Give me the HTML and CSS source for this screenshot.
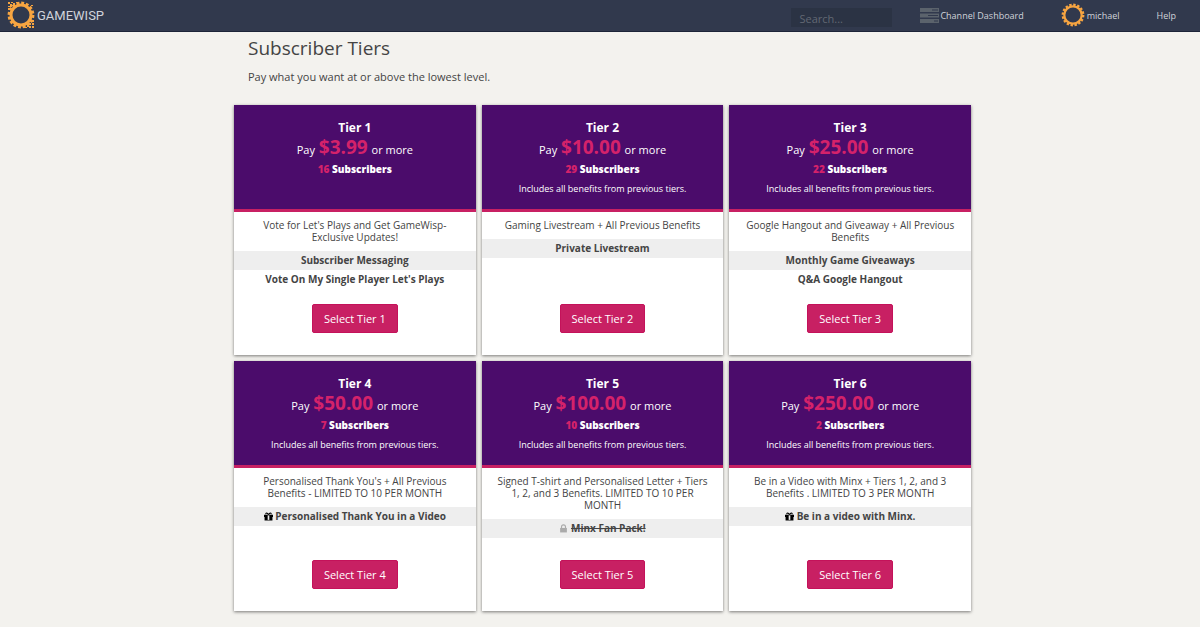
FILE: index.html
```
<!DOCTYPE html>
<html lang="en">
<head>
  <meta charset="UTF-8" />
  <meta name="viewport" content="width=device-width, initial-scale=1.0"/>
  <title>GameWisp - Subscriber Tiers</title>
  <link rel="stylesheet" href="styles.css">
</head>
<body>

  <!-- shared icons -->
  <svg class="sprite" aria-hidden="true">
    <symbol id="gear" viewBox="0 0 24 24">
      <circle cx="12" cy="12" r="8.7" fill="none" stroke="#f7a541" stroke-width="2.2"/>
      <circle cx="12" cy="12" r="10.2" fill="none" stroke="#f7a541" stroke-width="2.4" stroke-dasharray="2.4 1.6"/>
    </symbol>
    <symbol id="gift" viewBox="0 0 16 16">
      <path fill="#000" d="M0 5h16v4H0zM1 9h14v6H1z"/>
      <path fill="none" stroke="#000" stroke-width="2" d="M8 5C6 1 2.5 1 3.500 4M8 5c2-4 5.500-4 4.500-1"/>
      <path fill="#eee" d="M6.500 6h3v8h-3z"/>
    </symbol>
    <symbol id="lock" viewBox="0 0 16 16">
      <path fill="#aaa" d="M2 7h12v8H2z"/>
      <path fill="none" stroke="#aaa" stroke-width="2" d="M4.500 8V5a3.500 3.500 0 0 1 7 0v3"/>
    </symbol>
  </svg>

  <header class="topbar">
    <a class="brand" href="#">
      <svg class="logo" viewBox="0 0 28 28" aria-hidden="true">
        <circle cx="14" cy="14" r="10" fill="none" stroke="#f7a541" stroke-width="3"/>
        <circle cx="14" cy="14" r="12" fill="none" stroke="#f7a541" stroke-width="2.8" stroke-dasharray="2.9 1.8"/>
        <path fill="#f7a541" d="M1 1h2v2H1zM4 1h2v1H4zM6 2h2v2H6zM1 5h2v1H1zM3 3h2v3H3zM1 7h2v2H1zM9 1h2v1H9zM25 25h2v2h-2zM22 25h2v2h-2zM20 24h2v2h-2zM25 22h2v2h-2zM22 22h2v2h-2zM25 19h2v2h-2zM18 26h2v1h-2zM24 4h2v1h-2z"/>
      </svg>
      <span>GAMEWISP</span>
    </a>
    <nav class="menu">
      <input class="search" type="text" placeholder="Search..." aria-label="Search">
      <a class="dashboard" href="#">
        <svg class="bars" viewBox="0 0 19 15" aria-hidden="true">
          <path fill="#5b636c" d="M0 0h19v4H0zM0 5.500h19v4H0zM0 11h19v4H0z"/>
          <path fill="#31394d" d="M12 1.500h6v1h-6zM8 7h10v1H8zM14 12.500h4v1h-4z"/>
        </svg>
        Channel Dashboard
      </a>
      <a class="user" href="#">
        <svg class="avatar" aria-hidden="true"><use href="#gear"/></svg>
        michael
      </a>
      <a class="help" href="#">Help</a>
    </nav>
  </header>

  <main>
    <h1>Subscriber Tiers</h1>
    <p class="intro">Pay what you want at or above the lowest level.</p>

    <section class="tiers">
      <article class="tier">
        <div class="tier-head">
          <h2>Tier 1</h2>
          <p class="price">Pay <strong>$3.99</strong> or more</p>
          <p class="subs"><span>16</span> Subscribers</p>
        </div>
        <p class="desc">Vote for Let's Plays and Get GameWisp-Exclusive Updates!</p>
        <ul class="benefits">
          <li>Subscriber Messaging</li>
          <li>Vote On My Single Player Let's Plays</li>
        </ul>
        <button class="select" type="button">Select Tier 1</button>
      </article>

      <article class="tier">
        <div class="tier-head">
          <h2>Tier 2</h2>
          <p class="price">Pay <strong>$10.00</strong> or more</p>
          <p class="subs"><span>29</span> Subscribers</p>
          <p class="includes">Includes all benefits from previous tiers.</p>
        </div>
        <p class="desc">Gaming Livestream + All Previous Benefits</p>
        <ul class="benefits">
          <li>Private Livestream</li>
        </ul>
        <button class="select" type="button">Select Tier 2</button>
      </article>

      <article class="tier">
        <div class="tier-head">
          <h2>Tier 3</h2>
          <p class="price">Pay <strong>$25.00</strong> or more</p>
          <p class="subs"><span>22</span> Subscribers</p>
          <p class="includes">Includes all benefits from previous tiers.</p>
        </div>
        <p class="desc">Google Hangout and Giveaway + All Previous Benefits</p>
        <ul class="benefits">
          <li>Monthly Game Giveaways</li>
          <li>Q&amp;A Google Hangout</li>
        </ul>
        <button class="select" type="button">Select Tier 3</button>
      </article>

      <article class="tier">
        <div class="tier-head">
          <h2>Tier 4</h2>
          <p class="price">Pay <strong>$50.00</strong> or more</p>
          <p class="subs"><span>7</span> Subscribers</p>
          <p class="includes">Includes all benefits from previous tiers.</p>
        </div>
        <p class="desc">Personalised Thank You's + All Previous Benefits - LIMITED TO 10 PER MONTH</p>
        <ul class="benefits">
          <li><svg class="icon" aria-hidden="true"><use href="#gift"/></svg> Personalised Thank You in a Video</li>
        </ul>
        <button class="select" type="button">Select Tier 4</button>
      </article>

      <article class="tier">
        <div class="tier-head">
          <h2>Tier 5</h2>
          <p class="price">Pay <strong>$100.00</strong> or more</p>
          <p class="subs"><span>10</span> Subscribers</p>
          <p class="includes">Includes all benefits from previous tiers.</p>
        </div>
        <p class="desc">Signed T-shirt and Personalised Letter + Tiers 1, 2, and 3 Benefits. LIMITED TO 10 PER MONTH</p>
        <ul class="benefits">
          <li><svg class="icon" aria-hidden="true"><use href="#lock"/></svg> <del>Minx Fan Pack!</del></li>
        </ul>
        <button class="select" type="button">Select Tier 5</button>
      </article>

      <article class="tier">
        <div class="tier-head">
          <h2>Tier 6</h2>
          <p class="price">Pay <strong>$250.00</strong> or more</p>
          <p class="subs"><span>2</span> Subscribers</p>
          <p class="includes">Includes all benefits from previous tiers.</p>
        </div>
        <p class="desc">Be in a Video with Minx + Tiers 1, 2, and 3 Benefits . LIMITED TO 3 PER MONTH</p>
        <ul class="benefits">
          <li><svg class="icon" aria-hidden="true"><use href="#gift"/></svg> Be in a video with Minx.</li>
        </ul>
        <button class="select" type="button">Select Tier 6</button>
      </article>
    </section>
  </main>

</body>
</html>
```

FILE: styles.css
```
* {
  box-sizing: border-box;
}
body {
  margin: 0;
  background: #f3f2ee;
  font-family: "Open Sans", sans-serif;
  font-size: 11px;
  color: #444;
}
h1, h2, p, ul {
  margin: 0;
  padding: 0;
}
.sprite {
  display: none;
}
.topbar {
  display: flex;
  justify-content: space-between;
  align-items: flex-start;
  height: 32px;
  padding: 0 24px 0 7px;
  background: #31394d;
  border-bottom: 1px solid #1c2438;
}
.topbar a {
  display: flex;
  align-items: center;
  height: 30px;
  color: #d0d3da;
  text-decoration: none;
}
.brand {
  gap: 2px;
  font-family: Roboto, sans-serif;
  font-size: 13px;
  font-weight: 400;
}
.logo {
  width: 28px;
  height: 28px;
}
.menu {
  display: flex;
  font-size: 9px;
  font-weight: 500;
}
.search {
  width: 101px;
  height: 19px;
  margin: 8px 28px 0 0;
  padding: 2px 8px 0;
  border: 0;
  background: #2b3344;
  color: #c9ccd3;
  font-family: inherit;
  font-size: 11px;
}
.search::placeholder {
  color: #626873;
}
.dashboard {
  gap: 1px;
  margin-right: 37px;
}
.bars {
  width: 19px;
  height: 15px;
}
.user {
  gap: 2px;
  margin-right: 37px;
}
.avatar {
  width: 24px;
  height: 24px;
}
main {
  max-width: 742px;
  margin: 0 auto;
  padding: 3px 0 16px 5px;
}
h1 {
  padding-left: 14px;
  font-size: 19px;
  font-weight: 400;
  line-height: 26px;
}
.intro {
  padding: 8px 0 0 14px;
  font-size: 11px;
  line-height: 16px;
  margin-bottom: 20px;
}
.tiers {
  display: grid;
  grid-template-columns: repeat(3, 1fr);
  gap: 6px;
}
.tier {
  display: flex;
  flex-direction: column;
  align-items: center;
  min-height: 250px;
  padding-bottom: 22px;
  background: #fff;
  box-shadow: 0 1px 3px rgba(0, 0, 0, 0.5);
  text-align: center;
}
.tier-head {
  width: 100%;
  min-height: 107px;
  padding-top: 14px;
  background: #4b0c6b;
  border-bottom: 3px solid #c82063;
  color: #fff;
}
.tier-head h2 {
  font-size: 12px;
  font-weight: 700;
  line-height: 17px;
}
.price {
  font-size: 11px;
  line-height: 23px;
}
.price strong {
  margin: 0 1px;
  color: #d4226a;
  font-size: 19px;
}
.subs {
  font-size: 10px;
  font-weight: 800;
  line-height: 17px;
}
.subs span {
  color: #d4226a;
}
.includes {
  font-size: 9px;
  line-height: 21px;
}
.desc {
  padding: 7px 12px 8px;
  font-size: 10px;
  line-height: 12px;
}
.benefits {
  width: 100%;
  list-style: none;
  font-size: 10px;
  font-weight: 700;
  line-height: 19px;
}
.benefits li:nth-child(odd) {
  background: #eee;
}
.icon {
  width: 9px;
  height: 9px;
  vertical-align: -1px;
}
.select {
  height: 29px;
  margin-top: auto;
  padding: 0 11px;
  border: 1px solid #c4125a;
  border-radius: 2px;
  background: #c82063;
  color: #fff;
  font-family: inherit;
  font-size: 11px;
  font-weight: 500;
}
```
